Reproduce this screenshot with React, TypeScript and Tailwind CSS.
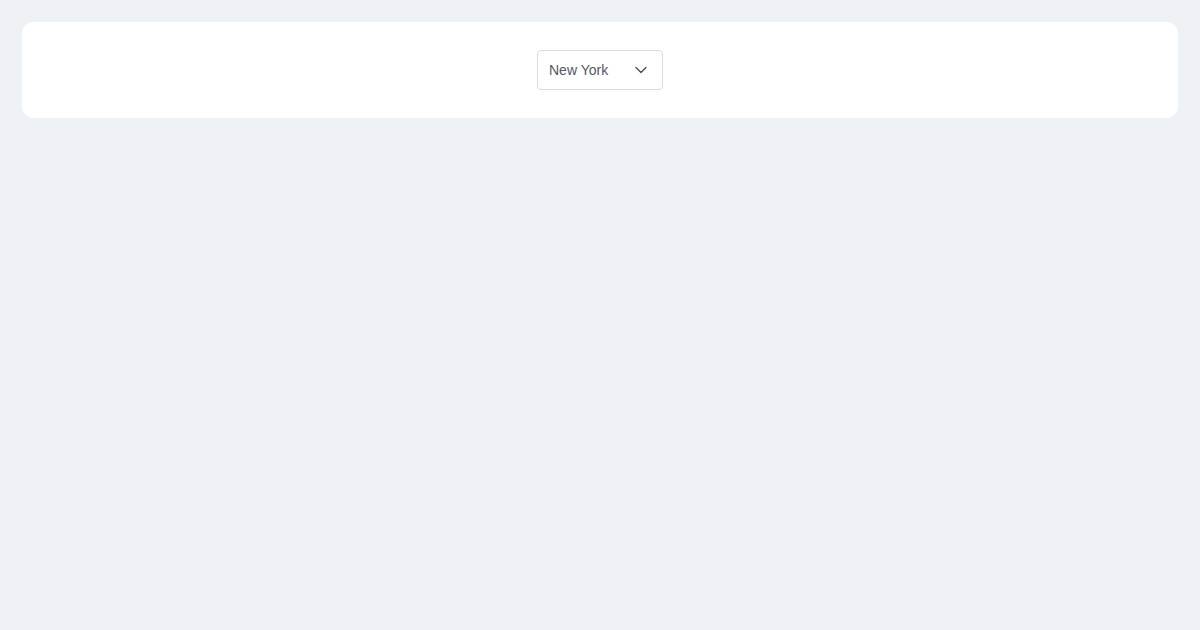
export default function App() {
  return (
    <div className="min-h-[630px] w-full bg-[#eef1f6] p-[22px]" style={{ fontFamily: '"Liberation Sans", Arial, sans-serif' }}>
      <div className="flex justify-center rounded-[12px] bg-white py-[28px]">
        <div className="flex h-[40px] w-[126px] items-center justify-between rounded-[4px] border border-[#d9dce1] bg-white pl-[11px] pr-[14px] text-[14px] text-[#525866]">
          <span>New York</span>
          <svg width="14" height="14" viewBox="0 0 14 14" fill="none" stroke="#4b5160" strokeWidth="1.4" strokeLinecap="round" strokeLinejoin="round">
            <path d="M2 4.5 L7 9.5 L12 4.5" />
          </svg>
        </div>
      </div>
    </div>
  );
}
